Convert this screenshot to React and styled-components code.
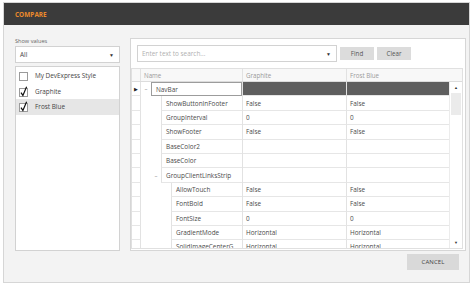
import React from 'react';
import styled, { createGlobalStyle } from 'styled-components';

const GlobalStyle = createGlobalStyle`
  html, body {
    margin: 0;
    padding: 0;
    background: #ffffff;
    font-family: "Open Sans", "Noto Sans", sans-serif;
  }
`;

const Dialog = styled.div`
  box-sizing: border-box;
  margin: 2px 0 0 3px;
  width: 467px;
  height: 281px;
  border: 1px solid #d6d6d6;
  background: #f3f3f3;
  display: flex;
  flex-direction: column;
`;

const Header = styled.div`
  height: 22px;
  background: #3b3b3b;
  display: flex;
  align-items: center;
  padding-left: 11px;
  color: #ec8a2c;
  font-weight: 700;
  font-size: 6.4px;
  letter-spacing: 0.05px;
`;

const Body = styled.div`
  flex: 1;
  padding: 13px 6px 0 11px;
  display: flex;
  flex-direction: column;
`;

const Main = styled.div`
  height: 213px;
  display: grid;
  grid-template-columns: 105px 1fr;
  column-gap: 10px;
`;

const LeftColumn = styled.div`
  display: flex;
  flex-direction: column;
`;

const Label = styled.div`
  height: 8px;
  line-height: 7px;
  font-size: 5.6px;
  color: #666;
`;

const Combo = styled.div`
  box-sizing: border-box;
  height: 17px;
  background: #fff;
  border: 1px solid #d2d2d2;
  display: flex;
  align-items: center;
  justify-content: space-between;
  padding: 0 5px 0 4px;
  font-size: 6.4px;
  color: ${p => (p.$placeholder ? '#b0b0b0' : '#444')};
`;

const Arrow = styled.span`
  font-size: 5px;
  color: #333;
`;

const List = styled.div`
  box-sizing: border-box;
  margin-top: 3px;
  flex: 1;
  background: #fff;
  border: 1px solid #d2d2d2;
  padding-top: 1px;
`;

const ListItem = styled.div`
  height: 15.5px;
  display: flex;
  align-items: center;
  padding-left: 3px;
  gap: 5px;
  font-size: 6.4px;
  color: #444;
  background: ${p => (p.$selected ? '#e6e6e6' : 'transparent')};
`;

const Panel = styled.div`
  box-sizing: border-box;
  background: #fff;
  border: 1px solid #d6d6d6;
  padding: 6px 2px 1px 0;
  display: flex;
  flex-direction: column;
`;

const SearchRow = styled.div`
  display: flex;
  align-items: center;
  padding-left: 6px;
  gap: 3px;
`;

const SearchBox = styled(Combo)`
  width: 200px;
`;

const Button = styled.div`
  height: 13px;
  width: ${p => p.$w}px;
  background: #dcdcdc;
  color: #555;
  font-size: 6.2px;
  display: flex;
  align-items: center;
  justify-content: center;
`;

const Grid = styled.div`
  margin-top: 6px;
  height: 181px;
  border: 1px solid #e0e0e0;
  box-sizing: border-box;
  display: flex;
  flex-direction: column;
  overflow: hidden;
`;

const HeaderRow = styled.div`
  height: 12px;
  flex: none;
  display: flex;
  background: #f8f8f8;
  border-bottom: 1px solid #dcdcdc;
  font-size: 6.2px;
  color: #9a9a9a;
`;

const HeadCell = styled.div`
  width: ${p => p.$w}px;
  flex: none;
  box-sizing: border-box;
  padding-left: ${p => p.$pl || 3}px;
  display: flex;
  align-items: center;
  border-right: ${p => (p.$line ? '1px solid #e2e2e2' : 'none')};
`;

const GridBody = styled.div`
  flex: 1;
  display: flex;
  min-height: 0;
`;

const Rows = styled.div`
  flex: 1;
  overflow: hidden;
`;

const Row = styled.div`
  height: 14.4px;
  display: flex;
  font-size: 6.4px;
  color: #4a4a4a;
`;

const Indicator = styled.div`
  width: 9px;
  flex: none;
  box-sizing: border-box;
  border-right: 1px solid #e2e2e2;
  border-bottom: 1px solid #e6e6e6;
  display: flex;
  align-items: center;
  justify-content: center;
  font-size: 4.5px;
  color: #222;
`;

const NameCell = styled.div`
  width: 102px;
  flex: none;
  display: flex;
  border-right: 1px solid #e2e2e2;
  box-sizing: border-box;
`;

const Indent = styled.div`
  width: ${p => p.$w}px;
  flex: none;
  display: flex;
  justify-content: flex-end;
`;

const Expander = styled.div`
  width: 10px;
  display: flex;
  align-items: center;
  justify-content: center;
  color: #777;
  font-size: 6px;
`;

const NameText = styled.div`
  flex: 1;
  min-width: 0;
  box-sizing: border-box;
  padding-left: 4px;
  display: flex;
  align-items: center;
  white-space: nowrap;
  overflow: hidden;
  border-left: 1px solid #e2e2e2;
  border-bottom: 1px solid #e6e6e6;
  ${p => p.$focused && `
    border: 1px solid #9c9c9c;
    background: #fff;
  `}
`;

const ValueCell = styled.div`
  width: ${p => p.$w}px;
  flex: none;
  box-sizing: border-box;
  padding-left: 3px;
  display: flex;
  align-items: center;
  border-right: ${p => (p.$line ? '1px solid #e2e2e2' : 'none')};
  border-bottom: 1px solid #e6e6e6;
  background: ${p => (p.$dark ? '#5e5e5e' : 'transparent')};
`;

const Scrollbar = styled.div`
  width: 12px;
  flex: none;
  display: flex;
  flex-direction: column;
  align-items: stretch;
  border-left: 1px solid #ececec;
  background: #fff;
`;

const ScrollArrow = styled.div`
  height: 11px;
  display: flex;
  align-items: center;
  justify-content: center;
  font-size: 4px;
  color: #333;
`;

const Thumb = styled.div`
  height: 22px;
  margin: 0 1px;
  background: #ebebeb;
`;

const Track = styled.div`
  flex: 1;
`;

const Footer = styled.div`
  display: flex;
  justify-content: flex-end;
  padding: 3px 4px 0 0;
`;

const CancelButton = styled.div`
  width: 52px;
  height: 16px;
  background: #d9d9d9;
  color: #444;
  font-size: 6px;
  letter-spacing: 0.1px;
  display: flex;
  align-items: center;
  justify-content: center;
`;

const CheckBox = ({ checked }) => (
  <svg width="11" height="11" viewBox="0 0 11 11">
    <rect x="0.5" y="2.5" width="8" height="8" fill="#fff" stroke="#9a9a9a" />
    {checked && (
      <path d="M2 6.6 L3.9 9.4 L7.6 0.8" fill="none" stroke="#111" strokeWidth="1.2" />
    )}
  </svg>
);

const styles = [
  { name: 'My DevExpress Style', checked: false },
  { name: 'Graphite', checked: true },
  { name: 'Frost Blue', checked: true, selected: true },
];

const rows = [
  { name: 'NavBar', level: 0, expander: true, focused: true, g: '', f: '' },
  { name: 'ShowButtonInFooter', level: 1, g: 'False', f: 'False' },
  { name: 'GroupInterval', level: 1, g: '0', f: '0' },
  { name: 'ShowFooter', level: 1, g: 'False', f: 'False' },
  { name: 'BaseColor2', level: 1, g: '', f: '' },
  { name: 'BaseColor', level: 1, g: '', f: '' },
  { name: 'GroupClientLinksStrip', level: 1, expander: true, g: '', f: '' },
  { name: 'AllowTouch', level: 2, g: 'False', f: 'False' },
  { name: 'FontBold', level: 2, g: 'False', f: 'False' },
  { name: 'FontSize', level: 2, g: '0', f: '0' },
  { name: 'GradientMode', level: 2, g: 'Horizontal', f: 'Horizontal' },
  { name: 'SolidImageCenterG...', level: 2, g: 'Horizontal', f: 'Horizontal' },
];

const App = () => {
  return (
    <>
      <GlobalStyle />
      <Dialog>
        <Header>COMPARE</Header>
        <Body>
          <Main>
            <LeftColumn>
              <Label>Show values</Label>
              <Combo>
                All
                <Arrow>▼</Arrow>
              </Combo>
              <List>
                {styles.map(s => (
                  <ListItem key={s.name} $selected={s.selected}>
                    <CheckBox checked={s.checked} />
                    {s.name}
                  </ListItem>
                ))}
              </List>
            </LeftColumn>
            <Panel>
              <SearchRow>
                <SearchBox $placeholder>
                  Enter text to search...
                  <Arrow>▼</Arrow>
                </SearchBox>
                <Button $w={34}>Find</Button>
                <Button $w={34}>Clear</Button>
              </SearchRow>
              <Grid>
                <HeaderRow>
                  <HeadCell $w={9} $pl={0} $line />
                  <HeadCell $w={102} $line>Name</HeadCell>
                  <HeadCell $w={104} $line>Graphite</HeadCell>
                  <HeadCell $w={114}>Frost Blue</HeadCell>
                </HeaderRow>
                <GridBody>
                  <Rows>
                    {rows.map((r, i) => (
                      <Row key={r.name}>
                        <Indicator>{i === 0 ? '▶' : ''}</Indicator>
                        <NameCell>
                          <Indent $w={10 * (r.level + 1)}>
                            <Expander>{r.expander ? '–' : ''}</Expander>
                          </Indent>
                          <NameText $focused={r.focused}>{r.name}</NameText>
                        </NameCell>
                        <ValueCell $w={104} $line $dark={r.focused}>{r.g}</ValueCell>
                        <ValueCell $w={102} $dark={r.focused}>{r.f}</ValueCell>
                      </Row>
                    ))}
                  </Rows>
                  <Scrollbar>
                    <ScrollArrow>▲</ScrollArrow>
                    <Thumb />
                    <Track />
                    <ScrollArrow>▼</ScrollArrow>
                  </Scrollbar>
                </GridBody>
              </Grid>
            </Panel>
          </Main>
          <Footer>
            <CancelButton>CANCEL</CancelButton>
          </Footer>
        </Body>
      </Dialog>
    </>
  );
};

export default App;
